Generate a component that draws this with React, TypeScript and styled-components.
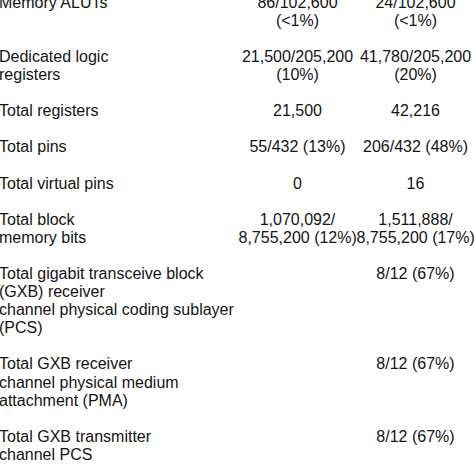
import React from "react";
import styled, { createGlobalStyle } from "styled-components";

const Global = createGlobalStyle`
  html, body {
    margin: 0;
    padding: 0;
    background: #ffffff;
    overflow: hidden;
  }
  body {
    font-family: "Liberation Sans", Arial, Helvetica, sans-serif;
  }
`;

const Page = styled.div`
  width: 474px;
  height: 474px;
  overflow: hidden;
  background: #ffffff;
`;

const Table = styled.div`
  display: grid;
  grid-template-columns: 239.5px 118px 118px;
  row-gap: 18.1px;
  margin-top: -6.4px;
  margin-left: -1px;
  font-size: 16px;
  line-height: 18.1px;
  color: #141414;
`;

const Cell = styled.div<{ $align: "left" | "center" }>`
  text-align: ${(p) => p.$align};
  white-space: nowrap;
`;

const Line = styled.div``;

type Row = { label: string[]; a: string[]; b: string[] };

const rows: Row[] = [
  { label: ["Memory ALUTs"], a: ["86/102,600", "(<1%)"], b: ["24/102,600", "(<1%)"] },
  {
    label: ["Dedicated logic", "registers"],
    a: ["21,500/205,200", "(10%)"],
    b: ["41,780/205,200", "(20%)"],
  },
  { label: ["Total registers"], a: ["21,500"], b: ["42,216"] },
  { label: ["Total pins"], a: ["55/432 (13%)"], b: ["206/432 (48%)"] },
  { label: ["Total virtual pins"], a: ["0"], b: ["16"] },
  {
    label: ["Total block", "memory bits"],
    a: ["1,070,092/", "8,755,200 (12%)"],
    b: ["1,511,888/", "8,755,200 (17%)"],
  },
  {
    label: [
      "Total gigabit transceive block",
      "(GXB) receiver",
      "channel physical coding sublayer",
      "(PCS)",
    ],
    a: [],
    b: ["8/12 (67%)"],
  },
  {
    label: ["Total GXB receiver", "channel physical medium", "attachment (PMA)"],
    a: [],
    b: ["8/12 (67%)"],
  },
  { label: ["Total GXB transmitter", "channel PCS"], a: [], b: ["8/12 (67%)"] },
];

const Lines = ({ items }: { items: string[] }) => (
  <>
    {items.map((t, i) => (
      <Line key={i}>{t}</Line>
    ))}
  </>
);

export default function App() {
  return (
    <>
      <Global />
      <Page>
        <Table>
          {rows.map((r, i) => (
            <React.Fragment key={i}>
              <Cell $align="left">
                <Lines items={r.label} />
              </Cell>
              <Cell $align="center">
                <Lines items={r.a} />
              </Cell>
              <Cell $align="center">
                <Lines items={r.b} />
              </Cell>
            </React.Fragment>
          ))}
        </Table>
      </Page>
    </>
  );
}
